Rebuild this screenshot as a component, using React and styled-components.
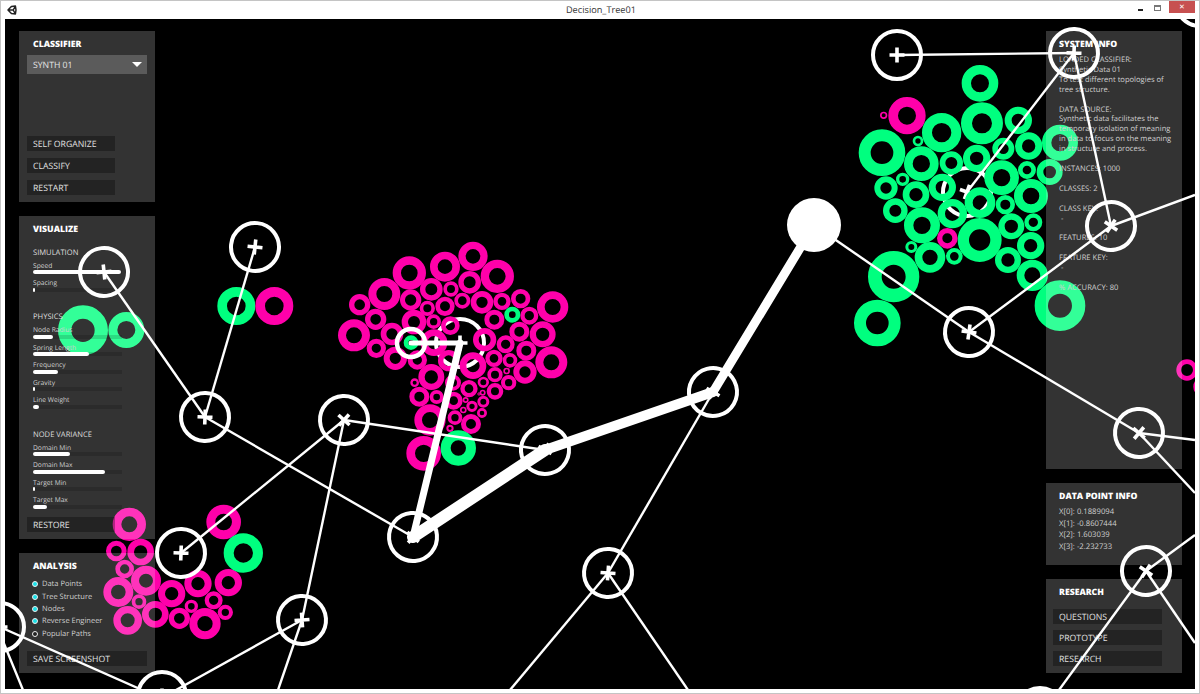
import styled, { createGlobalStyle } from "styled-components";

const GREEN = "#00ff7f";
const PINK = "#ff00aa";

// rings are [x, y, outer radius, hole radius], measured on 3x crops
const PINK_TREE = [
  [429, 79, 44, 22], [345, 110, 45, 22], [238, 129, 50, 25], [502, 139, 50, 25], [163, 192, 48, 24],
  [419, 157, 34, 18], [304, 178, 34, 18], [363, 177, 23, 12], [242, 210, 32, 17], [89, 224, 32, 16],
  [456, 217, 34, 17], [397, 212, 24, 13], [345, 229, 29, 15], [292, 235, 23, 12], [516, 214, 26, 13],
  [572, 206, 29, 15], [668, 231, 47, 24], [137, 268, 32, 16], [252, 276, 37, 18], [311, 275, 22, 11],
  [361, 287, 28, 14], [493, 269, 30, 15], [598, 257, 27, 14], [72, 316, 48, 24], [186, 312, 34, 17],
  [568, 305, 30, 15], [638, 313, 39, 20], [139, 355, 29, 14], [312, 338, 40, 20], [464, 329, 35, 18],
  [527, 343, 27, 14], [589, 362, 30, 15], [196, 385, 35, 17], [262, 390, 29, 14], [356, 392, 32, 16],
  [429, 407, 40, 20], [492, 385, 26, 13], [540, 391, 22, 11], [664, 397, 48, 24], [585, 426, 35, 17],
  [304, 441, 39, 20], [495, 434, 23, 12], [530, 423, 10, 5], [536, 458, 23, 11], [254, 458, 13, 6],
  [369, 458, 24, 12], [417, 476, 26, 13], [460, 457, 17, 9], [495, 484, 25, 12], [268, 500, 30, 15],
  [320, 501, 21, 10], [371, 512, 27, 13], [458, 488, 9, 4], [447, 492, 5, 2], [460, 515, 18, 9],
  [407, 510, 9, 4], [426, 529, 17, 8], [400, 540, 10, 5], [456, 549, 15, 7], [375, 563, 22, 11],
  [300, 570, 47, 24], [423, 582, 30, 15], [360, 595, 11, 5], [281, 670, 52, 26],
];
const PINK_TREE_GREENS = [[385, 654, 53, 23], [547, 254, 24, 10], [243, 338, 22, 8]];

const GREEN_TREE = [
  [420, 70, 55, 27], [426, 190, 63, 30], [535, 181, 41, 20], [305, 218, 59, 29], [126, 278, 70, 34],
  [234, 243, 16, 8], [244, 311, 52, 26], [334, 309, 35, 18], [410, 295, 41, 20], [490, 266, 33, 16],
  [566, 258, 41, 20], [660, 248, 54, 26], [629, 336, 39, 19], [561, 330, 27, 13], [485, 353, 52, 26],
  [138, 384, 35, 17], [188, 358, 20, 10], [228, 404, 40, 20], [307, 382, 41, 20], [166, 452, 37, 18],
  [573, 408, 51, 25], [420, 428, 46, 22], [496, 434, 29, 15], [337, 461, 44, 22], [246, 496, 54, 26],
  [514, 499, 39, 20], [580, 487, 27, 14], [419, 540, 66, 32], [214, 561, 18, 9], [270, 592, 46, 23],
  [343, 589, 25, 13], [572, 557, 41, 20], [504, 600, 39, 20], [577, 646, 47, 24], [161, 650, 77, 36],
  [112, 789, 70, 34], [660, 737, 76, 36],
];
const GREEN_TREE_PINKS = [[201, 167, 56, 27], [131, 166, 11, 6], [322, 535, 31, 15]];

const LOWER_LEFT = [
  [118, 103, 50, 24], [401, 96, 52, 25], [79, 183, 31, 16], [152, 186, 40, 20], [104, 237, 28, 14],
  [168, 272, 45, 21], [85, 306, 45, 22], [147, 335, 22, 11], [245, 311, 41, 20], [324, 281, 41, 20],
  [415, 278, 41, 20], [371, 331, 27, 14], [304, 349, 20, 10], [406, 367, 23, 11], [113, 391, 43, 21],
  [196, 373, 40, 20], [268, 385, 32, 16], [345, 401, 47, 23],
];
const LOWER_LEFT_GREENS = [[460, 189, 59, 29]];

const MID_LEFT_GREENS = [[249, 361, 75, 35], [379, 360, 54, 27], [709, 288, 57, 28]];
const MID_LEFT_PINKS = [[823, 288, 57, 28]];

const EDGE_PINKS = [[561, 450, 32, 18], [610, 500, 30, 16]];

// [x, y, cross angle]
const NODES = [
  [104, 272, -6], [255, 247, 6], [205, 417, 2], [344, 420, 42], [545, 450, 30], [713, 392, 30],
  [413, 537, 40], [969, 332, 8], [897, 55, 0], [1074, 53, 2], [1111, 226, 34], [1139, 433, 40],
  [1146, 571, 34], [608, 573, 4], [302, 620, -4], [181, 553, 2], [0, 627, 0], [162, 696, 0],
  [1040, 712, 0], [1200, 2, 0],
];
const BURIED_NODES = [[460, 343, 0], [967, 192, 20]];

const THIN_EDGES = [
  [104, 272, 205, 417], [255, 247, 205, 417], [205, 417, 413, 537], [344, 420, 181, 553],
  [344, 420, 302, 620], [344, 420, 545, 450], [814, 225, 969, 332], [969, 332, 1139, 433],
  [969, 332, 1111, 226], [1111, 226, 1195, 195], [1074, 53, 1111, 226], [897, 55, 1074, 53],
  [1074, 53, 967, 192], [713, 392, 608, 573], [608, 573, 510, 690], [608, 573, 688, 690],
  [1139, 433, 1195, 440], [1139, 433, 1195, 493], [1146, 571, 1195, 535], [1146, 571, 1195, 643],
  [1146, 571, 1059, 690], [302, 620, 176, 690], [302, 620, 278, 690], [0, 627, 140, 689], [0, 634, 23, 690],
];
const THICK_EDGES = [
  [814, 225, 713, 392, 9], [713, 392, 545, 450, 10], [545, 450, 413, 537, 12],
  [413, 537, 460, 343, 7], [460, 343, 411, 343, 5],
];

const SLIDER_GROUPS = [
  {
    title: "SIMULATION",
    sliders: [["Speed", 88], ["Spacing", 2]],
  },
  {
    title: "PHYSICS",
    sliders: [["Node Radius", 20], ["Spring Length", 56], ["Frequency", 25], ["Gravity", 2], ["Line Weight", 6]],
  },
  {
    title: "NODE VARIANCE",
    sliders: [["Domain Min", 37], ["Domain Max", 72], ["Target Min", 2], ["Target Max", 14]],
  },
];

const ANALYSIS = [
  ["Data Points", true],
  ["Tree Structure", true],
  ["Nodes", true],
  ["Reverse Engineer", true],
  ["Popular Paths", false],
];

const SYSTEM_INFO = `LOADED CLASSIFIER:
Synthetic Data 01
To test different topologies of
tree structure.

DATA SOURCE:
Synthetic data facilitates the
temporary isolation of meaning
in data to focus on the meaning
in structure and process.

INSTANCES: 1000

CLASSES: 2

CLASS KEY:
 -

FEATURES: 10

FEATURE KEY:
 -

% ACCURACY: 80`;

function Rings({ rings, color }) {
  return rings.map(([x, y, outer, hole]) => (
    <circle
      key={`${x}-${y}`}
      cx={x}
      cy={y}
      r={(outer + hole) / 2}
      fill="none"
      stroke={color}
      strokeWidth={outer - hole}
    />
  ));
}

function Node({ x, y, angle }) {
  return (
    <g transform={`translate(${x} ${y}) rotate(${angle})`}>
      <circle r="24" fill="none" stroke="#fff" strokeWidth="4" />
      <path d="M-7.5 0H7.5M0-7.5V7.5" stroke="#fff" strokeWidth="3.6" />
    </g>
  );
}

function UnityIcon() {
  return (
    <svg width="10" height="10" viewBox="0 0 10 10">
      <path
        d="M1 5 4.4 1.4 8.4 1 9 5 8.4 9 4.4 8.6ZM1 5H6.2M8.4 1 6.2 5 8.4 9"
        fill="none"
        stroke="#222"
        strokeWidth="1.5"
        strokeLinejoin="round"
      />
    </svg>
  );
}

export default function App() {
  return (
    <>
      <GlobalStyle />
      <Window>
        <TitleBar>
          <UnityIcon />
          <WindowTitle>Decision_Tree01</WindowTitle>
          <WindowControls>
            <MinimizeButton />
            <MaximizeButton />
            <CloseButton>✕</CloseButton>
          </WindowControls>
        </TitleBar>

        <Stage>
          <Canvas viewBox="5 19 1190 670">
            {BURIED_NODES.map(([x, y, a]) => (
              <Node key={x} x={x} y={y} angle={a} />
            ))}
            <g transform="translate(330 230) scale(0.3333)">
              <Rings rings={PINK_TREE} color={PINK} />
              <Rings rings={PINK_TREE_GREENS} color={GREEN} />
            </g>
            <g transform="translate(840 60) scale(0.3333)">
              <Rings rings={GREEN_TREE} color={GREEN} />
              <Rings rings={GREEN_TREE_PINKS} color={PINK} />
            </g>
            <g transform="translate(90 490) scale(0.3333)">
              <Rings rings={LOWER_LEFT} color={PINK} />
              <Rings rings={LOWER_LEFT_GREENS} color={GREEN} />
            </g>
            <g transform="translate(0 210) scale(0.3333)">
              <Rings rings={MID_LEFT_GREENS} color={GREEN} />
              <Rings rings={MID_LEFT_PINKS} color={PINK} />
            </g>
            <g transform="translate(1000 220) scale(0.3333)">
              <Rings rings={EDGE_PINKS} color={PINK} />
            </g>
          </Canvas>

          <PanelColumn>
            <Panel $height={171}>
              <PanelTitle>CLASSIFIER</PanelTitle>
              <Dropdown>
                SYNTH 01
                <Caret />
              </Dropdown>
              <ButtonStack>
                <Button>SELF ORGANIZE</Button>
                <Button>CLASSIFY</Button>
                <Button>RESTART</Button>
              </ButtonStack>
            </Panel>

            <Panel $height={323}>
              <PanelTitle>VISUALIZE</PanelTitle>
              {SLIDER_GROUPS.map((group) => (
                <SliderGroup key={group.title}>
                  <GroupTitle>{group.title}</GroupTitle>
                  {group.sliders.map(([label, value]) => (
                    <Slider key={label}>
                      <SliderLabel>{label}</SliderLabel>
                      <Track>
                        <Fill style={{ width: value }} />
                      </Track>
                    </Slider>
                  ))}
                </SliderGroup>
              ))}
              <ButtonStack>
                <Button>RESTORE</Button>
              </ButtonStack>
            </Panel>

            <Panel $height={120}>
              <PanelTitle>ANALYSIS</PanelTitle>
              <RadioList>
                {ANALYSIS.map(([label, on]) => (
                  <RadioRow key={label}>
                    <Radio $on={on} />
                    {label}
                  </RadioRow>
                ))}
              </RadioList>
              <ButtonStack>
                <Button $wide>SAVE SCREENSHOT</Button>
              </ButtonStack>
            </Panel>
          </PanelColumn>

          <PanelColumn>
            <Panel $height={438} $inset={7}>
              <PanelTitle>SYSTEM INFO</PanelTitle>
              <InfoText>{SYSTEM_INFO}</InfoText>
            </Panel>

            <Panel $height={82} $inset={7}>
              <PanelTitle>DATA POINT INFO</PanelTitle>
              <PointList>
                <div>X[0]: 0.1889094</div>
                <div>X[1]: -0.8607444</div>
                <div>X[2]: 1.603039</div>
                <div>X[3]: -2.232733</div>
              </PointList>
            </Panel>

            <Panel $height={94} $inset={7}>
              <PanelTitle>RESEARCH</PanelTitle>
              <ButtonStack $gap={6}>
                <Button $long>QUESTIONS</Button>
                <Button $long>PROTOTYPE</Button>
                <Button $long>RESEARCH</Button>
              </ButtonStack>
            </Panel>
          </PanelColumn>

          <OverCanvas viewBox="5 19 1190 670">
            {THIN_EDGES.map(([x1, y1, x2, y2]) => (
              <line key={`${x1}-${y1}-${x2}-${y2}`} x1={x1} y1={y1} x2={x2} y2={y2} stroke="#fff" strokeWidth="2.4" />
            ))}
            {THICK_EDGES.map(([x1, y1, x2, y2, w]) => (
              <line key={`${x1}-${x2}`} x1={x1} y1={y1} x2={x2} y2={y2} stroke="#fff" strokeWidth={w} strokeLinecap="round" />
            ))}
            {NODES.map(([x, y, a]) => (
              <Node key={`${x}-${y}`} x={x} y={y} angle={a} />
            ))}
            <circle cx="411" cy="343" r="14" fill="none" stroke="#fff" strokeWidth="4.5" />
            <circle cx="814" cy="225" r="27" fill="#fff" />
          </OverCanvas>
        </Stage>
      </Window>
    </>
  );
}

const GlobalStyle = createGlobalStyle`
  html, body {
    margin: 0;
    background: #fff;
    font-family: "Open Sans", "Liberation Sans", sans-serif;
    text-rendering: geometricPrecision;
  }
`;

const Window = styled.div`
  box-sizing: border-box;
  width: 1200px;
  height: 694px;
  display: flex;
  flex-direction: column;
  padding: 0 4px 4px;
  background: #fff;
  border: 1px solid #c4c4c4;
`;

const TitleBar = styled.div`
  height: 18px;
  flex: none;
  display: grid;
  grid-template-columns: 1fr auto 1fr;
  align-items: start;
  padding: 3px 0 0 2px;
  box-sizing: border-box;
  svg {
    justify-self: start;
    margin-top: 1px;
  }
`;

const WindowTitle = styled.div`
  font-size: 9.2px;
  line-height: 12px;
  color: #333;
`;

const WindowControls = styled.div`
  justify-self: end;
  display: flex;
  align-items: flex-start;
  margin-top: -3px;
`;

const MinimizeButton = styled.div`
  width: 5px;
  height: 2px;
  margin: 8px 11px 0 0;
  background: #222;
`;

const MaximizeButton = styled.div`
  box-sizing: border-box;
  width: 7px;
  height: 6px;
  margin: 4px 8px 0 0;
  border: 1px solid #777;
  border-top-width: 2px;
`;

const CloseButton = styled.div`
  width: 26px;
  height: 12px;
  background: #c75050;
  color: #fff;
  font-family: "DejaVu Sans", sans-serif;
  font-size: 7px;
  font-weight: 700;
  line-height: 12px;
  text-align: center;
`;

const Stage = styled.div`
  position: relative;
  flex: 1;
  display: flex;
  justify-content: space-between;
  padding: 12px 13px 0 14px;
  background: #000;
  overflow: hidden;
`;

const Canvas = styled.svg`
  position: absolute;
  inset: 0;
  width: 100%;
  height: 100%;
`;

const OverCanvas = styled(Canvas)`
  z-index: 2;
  pointer-events: none;
`;

const PanelColumn = styled.div`
  position: relative;
  z-index: 1;
  width: 136px;
  display: flex;
  flex-direction: column;
  gap: 14px;
`;

const Panel = styled.section`
  box-sizing: border-box;
  height: ${(p) => p.$height}px;
  display: flex;
  flex-direction: column;
  padding: 7px ${(p) => p.$inset ?? 8}px;
  background: rgba(255, 255, 255, 0.2);
`;

const PanelTitle = styled.h2`
  margin: 0 0 -1px 6px;
  font-size: 8.7px;
  font-weight: 800;
  line-height: 12px;
  color: #fff;
`;

const Dropdown = styled.div`
  display: flex;
  align-items: center;
  justify-content: space-between;
  height: 19px;
  margin-top: 6px;
  padding: 0 5px 0 6px;
  background: rgba(255, 255, 255, 0.2);
  font-size: 8.7px;
  color: #e6e6e6;
`;

const Caret = styled.span`
  width: 0;
  height: 0;
  border-left: 5px solid transparent;
  border-right: 5px solid transparent;
  border-top: 5px solid #fff;
`;

const ButtonStack = styled.div`
  margin-top: auto;
  display: flex;
  flex-direction: column;
  gap: ${(p) => p.$gap ?? 7}px;
`;

const Button = styled.div`
  box-sizing: border-box;
  width: ${(p) => (p.$wide ? 120 : p.$long ? 109 : 88)}px;
  height: 15px;
  padding-left: 6px;
  background: rgba(0, 0, 0, 0.3);
  font-size: 8.7px;
  line-height: 16px;
  color: #e0e0e0;
`;

const SliderGroup = styled.div`
  margin-top: 16.75px;
  &:nth-child(2) {
    margin-top: 13.5px;
  }
`;

const GroupTitle = styled.div`
  margin: 0 0 2px 6px;
  font-size: 7.6px;
  line-height: 11px;
  color: #ddd;
`;

const Slider = styled.div`
  height: 17.5px;
  padding-left: 6px;
`;

const SliderLabel = styled.div`
  font-size: 6.7px;
  line-height: 9.5px;
  color: #d0d0d0;
`;

const Track = styled.div`
  width: 89px;
  height: 4px;
  background: rgba(0, 0, 0, 0.14);
`;

const Fill = styled.div`
  height: 100%;
  border-radius: 2px;
  background: #fff;
`;

const RadioList = styled.div`
  margin-top: 7px;
  padding-left: 5px;
`;

const RadioRow = styled.div`
  display: flex;
  align-items: center;
  gap: 4px;
  height: 12.4px;
  font-size: 7.5px;
  color: #d0d0d0;
`;

const Radio = styled.span`
  box-sizing: border-box;
  width: 6px;
  height: 6px;
  border-radius: 50%;
  border: 1.2px solid #eee;
  background: ${(p) => (p.$on ? "#19e0e8" : "#222")};
`;

const InfoText = styled.div`
  margin: 7px 0 0 6px;
  font-size: 7.6px;
  line-height: 9.9px;
  white-space: pre;
  color: #d0d0d0;
`;

const PointList = styled.div`
  margin: 6px 0 0 6px;
  font-size: 7.7px;
  line-height: 11.6px;
  color: #d0d0d0;
`;
